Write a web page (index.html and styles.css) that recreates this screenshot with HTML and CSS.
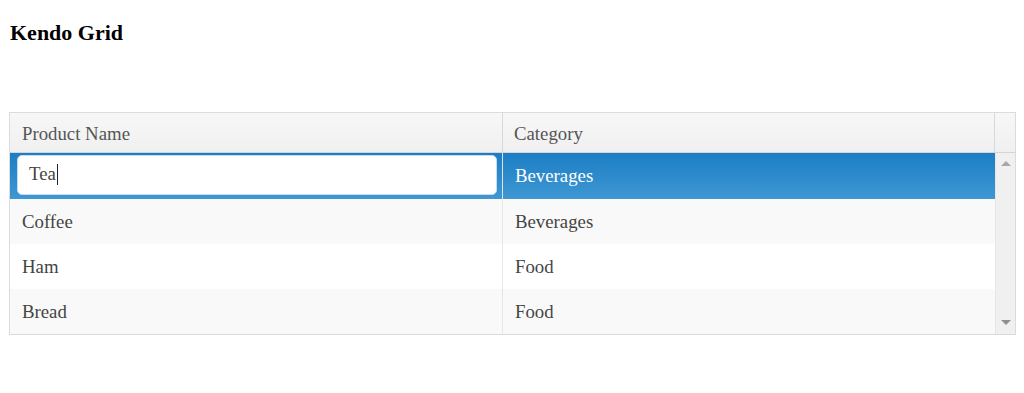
FILE: index.html
```html
<!DOCTYPE html>
<html>
<head>
<meta charset="utf-8">
<link rel="stylesheet" href="styles.css">
</head>
<body>
<div class="page">
  <h3 class="title">Kendo Grid</h3>
  <div class="grid">
    <div class="grid-header">
      <div class="th col1">Product Name</div>
      <div class="th col2">Category</div>
      <div class="th-spacer"></div>
    </div>
    <div class="grid-body">
      <div class="rows">
        <div class="row selected">
          <div class="td col1 edit-cell"><div class="editor">Tea<span class="caret"></span></div></div>
          <div class="td col2">Beverages</div>
        </div>
        <div class="row alt">
          <div class="td col1">Coffee</div>
          <div class="td col2">Beverages</div>
        </div>
        <div class="row">
          <div class="td col1">Ham</div>
          <div class="td col2">Food</div>
        </div>
        <div class="row alt">
          <div class="td col1">Bread</div>
          <div class="td col2">Food</div>
        </div>
      </div>
      <div class="scrollbar">
        <span class="arrow up"></span>
        <span class="arrow down"></span>
      </div>
    </div>
  </div>
</div>
</body>
</html>
```
FILE: styles.css
```css
html, body {
  margin: 0;
  padding: 0;
  background: #fff;
}
.page {
  padding: 20px 8px 0 9px;
  font-family: "Liberation Serif", "Times New Roman", serif;
}
.title {
  margin: 0 0 67px 1px;
  font-size: 22px;
  font-weight: bold;
  color: #000;
  line-height: 25px;
}
.grid {
  border: 1px solid #dbdbdb;
  box-sizing: border-box;
  width: 1007px;
}
.grid-header {
  display: flex;
  height: 39px;
  background: linear-gradient(#f7f7f7, #f0f0f0);
  border-bottom: 1px solid #d5d5d5;
}
.th {
  box-sizing: border-box;
  display: flex;
  align-items: center;
  padding-left: 12px;
  padding-top: 2px;
  font-size: 18.8px;
  color: #555;
}
.col1 {
  width: 493px;
  border-right: 1px solid #d8d8d8;
  box-sizing: border-box;
}
.col2 {
  width: 492px;
  box-sizing: border-box;
}
.th.col2 {
  border-right: 1px solid #d8d8d8;
  padding-left: 11px;
}
.th-spacer {
  flex: 1;
}
.grid-body {
  display: flex;
}
.rows {
  width: 985px;
}
.row {
  display: flex;
  height: 45px;
  background: #fff;
}
.row.alt {
  background: #f9f9f9;
}
.row.selected {
  height: 46px;
  background: linear-gradient(#1b7ec4, #3f97d3);
}
.td {
  box-sizing: border-box;
  display: flex;
  align-items: center;
  padding-left: 12px;
  padding-top: 1px;
  font-size: 18.8px;
  color: #444;
}
.row .col1 {
  border-right: 1px solid #e6e6e6;
}
.row.selected .col1 {
  border-right: 1px solid #e2e2e2;
}
.td.col2 {
  padding-left: 12px;
}
.row.selected .td.col2 {
  color: #fff;
  padding-top: 0;
  padding-bottom: 1px;
}
.row.selected .edit-cell {
  padding: 2px 5px 4px 7px;
  align-items: stretch;
}
.editor {
  flex: 1;
  background: #fff;
  border: 1px solid #c9dcef;
  border-radius: 5px;
  box-sizing: border-box;
  display: flex;
  align-items: center;
  padding-left: 11px;
  padding-bottom: 2px;
  color: #444;
  font-size: 18.8px;
}
.caret {
  display: inline-block;
  width: 1px;
  height: 21px;
  background: #222;
  margin-left: 1px;
}
.scrollbar {
  flex: 1;
  background: #f0f0f0;
  border-left: 1px solid #e6e6e6;
  display: flex;
  flex-direction: column;
  justify-content: space-between;
  align-items: center;
  padding: 8px 0 9px 0;
}
.arrow {
  width: 0;
  height: 0;
  border-left: 5px solid transparent;
  border-right: 5px solid transparent;
}
.arrow.up {
  border-bottom: 5px solid #a8a8a8;
}
.arrow.down {
  border-top: 5px solid #8f8f8f;
}
```
